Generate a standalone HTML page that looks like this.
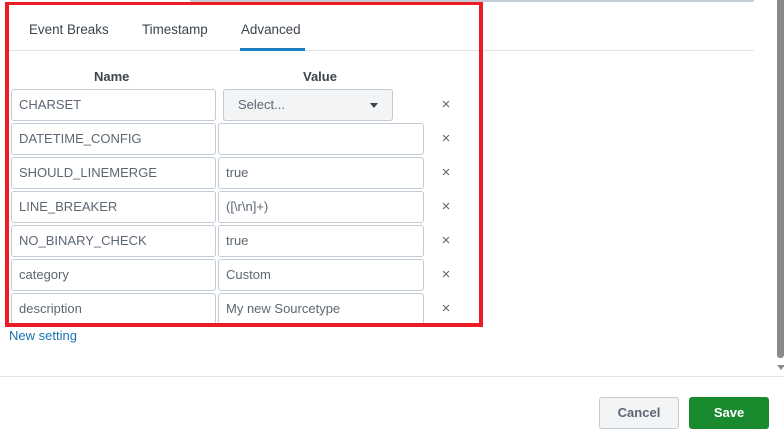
<!DOCTYPE html>
<html><head><style>
*{box-sizing:border-box;margin:0;padding:0}
body{width:784px;height:446px;background:#fff;font-family:"Liberation Sans",sans-serif;position:relative;overflow:hidden;color:#3c444d}
.a{position:absolute}
.in{position:absolute;height:32px;border:1px solid #c3cbd4;border-radius:3px;background:#fff;font-size:13px;color:#5c6773;padding:0 7px;line-height:30px;white-space:nowrap}
.x{position:absolute;left:440px;font-size:15px;color:#5c6773;width:12px;text-align:center}
</style></head><body>
<div class="a" style="left:190px;top:0;width:564px;height:2px;background:#c3cbd4;border-radius:0 0 3px 3px"></div>
<div class="a" style="left:9px;top:50px;width:745px;height:1px;background:#dfe3e8"></div>
<div class="a" style="left:29px;top:22px;font-size:13.4px;color:#3c444d">Event Breaks</div>
<div class="a" style="left:142px;top:22px;font-size:13.4px;color:#3c444d">Timestamp</div>
<div class="a" style="left:241px;top:22px;font-size:13.4px;color:#3c444d">Advanced</div>
<div class="a" style="left:240px;top:48px;width:65px;height:3px;background:#1a7fc1"></div>
<div class="a" style="left:94px;top:69px;font-size:13px;font-weight:bold">Name</div>
<div class="a" style="left:303px;top:69px;font-size:13px;font-weight:bold">Value</div>

<div class="in" style="left:11px;top:89px;width:205px">CHARSET</div>
<div class="in" style="left:223px;top:89px;width:170px;background:#f2f4f5;border-color:#c3cbd4;padding-left:14px">Select...<span style="position:absolute;right:14px;top:13px;width:0;height:0;border-left:4px solid transparent;border-right:4px solid transparent;border-top:5px solid #3c444d"></span></div>
<div class="x" style="top:96px">×</div>

<div class="in" style="left:11px;top:123px;width:205px">DATETIME_CONFIG</div>
<div class="in" style="left:218px;top:123px;width:206px"></div>
<div class="x" style="top:130px">×</div>

<div class="in" style="left:11px;top:157px;width:205px">SHOULD_LINEMERGE</div>
<div class="in" style="left:218px;top:157px;width:206px">true</div>
<div class="x" style="top:164px">×</div>

<div class="in" style="left:11px;top:191px;width:205px">LINE_BREAKER</div>
<div class="in" style="left:218px;top:191px;width:206px">([\r\n]+)</div>
<div class="x" style="top:198px">×</div>

<div class="in" style="left:11px;top:225px;width:205px">NO_BINARY_CHECK</div>
<div class="in" style="left:218px;top:225px;width:206px">true</div>
<div class="x" style="top:232px">×</div>

<div class="in" style="left:11px;top:259px;width:205px">category</div>
<div class="in" style="left:218px;top:259px;width:206px">Custom</div>
<div class="x" style="top:266px">×</div>

<div class="in" style="left:11px;top:293px;width:205px">description</div>
<div class="in" style="left:218px;top:293px;width:206px">My new Sourcetype</div>
<div class="x" style="top:300px">×</div>

<div class="a" style="left:5px;top:2px;width:478px;height:325px;border:4px solid #ed1c24;border-top-width:3px"></div>
<div class="a" style="left:9px;top:328px;font-size:13px;color:#1a72b0">New setting</div>

<div class="a" style="left:777px;top:0;width:7px;height:358px;background:#8a8a8a;border-radius:0 0 3px 3px"></div>
<div class="a" style="left:777px;top:365px;width:0;height:0;border-left:4px solid transparent;border-right:4px solid transparent;border-top:5px solid #8a8a8a"></div>
<div class="a" style="left:0;top:376px;width:784px;height:1px;background:#dfe3e8"></div>

<div class="a" style="left:599px;top:397px;width:80px;height:32px;border:1px solid #c3cbd4;border-radius:3px;background:#f2f4f5;text-align:center;line-height:30px;font-size:13px;font-weight:bold;color:#5c6773">Cancel</div>
<div class="a" style="left:689px;top:397px;width:80px;height:32px;border-radius:3px;background:#1a8a2e;text-align:center;line-height:32px;font-size:13px;font-weight:bold;color:#fff">Save</div>
</body></html>
